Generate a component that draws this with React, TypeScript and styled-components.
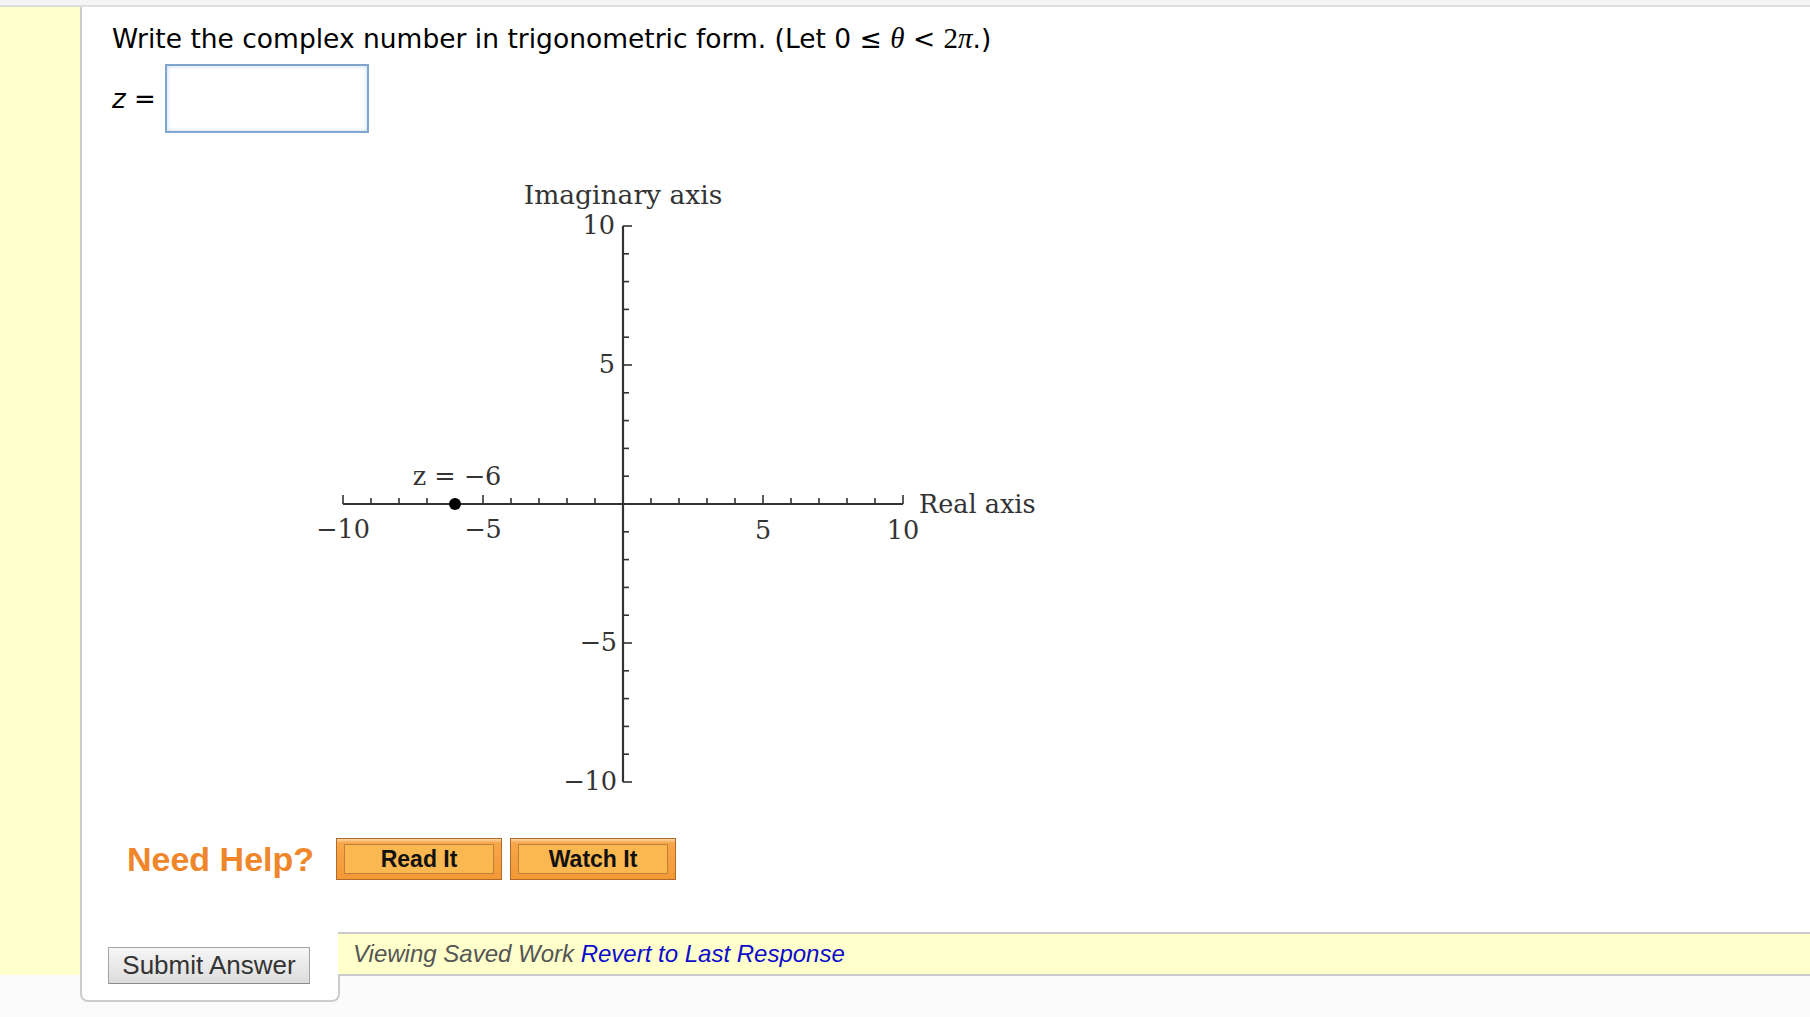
import styled, { createGlobalStyle } from 'styled-components'

const GlobalStyle = createGlobalStyle`
  html, body {
    margin: 0;
    padding: 0;
  }
  body {
    background: #fbfbfb;
    font-family: "DejaVu Sans", Verdana, sans-serif;
    color: #000;
  }
`

const TopStrip = styled.div`
  height: 5px;
  background: #f5f5f5;
  border-bottom: 2px solid #dedede;
`

const Page = styled.div`
  display: flex;
  align-items: flex-start;
`

const Sidebar = styled.div`
  width: 80px;
  height: 968px;
  flex-shrink: 0;
  background: #ffffcc;
`

const Column = styled.div`
  flex: 1;
  display: flex;
  flex-direction: column;
`

const Content = styled.div`
  height: 925px;
  box-sizing: border-box;
  background: #fff;
  border-left: 2px solid #cccccc;
  padding: 16px 0 0 30px;
  display: flex;
  flex-direction: column;
  align-items: flex-start;
`

const Question = styled.p`
  margin: 0;
  font-size: 26.5px;
  line-height: 30px;
`

const MathVar = styled.span<{ upright?: boolean }>`
  font-family: "Liberation Serif", "Times New Roman", serif;
  font-style: ${p => (p.upright ? 'normal' : 'italic')};
  font-size: 29px;
`

const AnswerRow = styled.div`
  display: flex;
  align-items: center;
  gap: 9px;
  margin-top: 10px;
  font-size: 26px;
`

const AnswerLabel = styled.span`
  white-space: pre;
  > i {
    font-style: italic;
  }
`

const AnswerInput = styled.input`
  width: 204px;
  height: 69px;
  box-sizing: border-box;
  border: 2px solid #80a5ce;
  box-shadow: inset 0 0 4px rgba(140, 180, 230, 0.55);
  background: #fff;
  outline: none;
  padding: 0 8px;
  font-size: 24px;
`

const Graph = styled.svg`
  display: block;
  margin: 28px 0 0 188px;
  font-family: "DejaVu Serif", "Liberation Serif", serif;
`

const HelpRow = styled.div`
  display: flex;
  align-items: center;
  margin: 37px 0 0 15px;
`

const HelpLabel = styled.span`
  font-family: "Liberation Sans", Arial, sans-serif;
  font-weight: bold;
  font-size: 34px;
  color: #f0862a;
  margin-right: 22px;
`

const HelpButton = styled.button`
  width: 166px;
  height: 42px;
  box-sizing: border-box;
  margin: 0 8px 0 0;
  padding: 5px 7px;
  border: 1px solid #b26a28;
  background: linear-gradient(#fcd7a4 0, #f7a649 4px, #f39936 100%);
  cursor: pointer;
`

const HelpButtonFace = styled.span`
  display: flex;
  height: 100%;
  box-sizing: border-box;
  align-items: center;
  justify-content: center;
  border: 1px solid #c1813a;
  background: #fbb851;
  font-family: "Liberation Sans", Arial, sans-serif;
  font-weight: bold;
  font-size: 23px;
  color: #111;
`

const Footer = styled.div`
  display: flex;
  align-items: flex-start;
`

const SubmitTab = styled.div`
  width: 260px;
  height: 70px;
  flex-shrink: 0;
  box-sizing: border-box;
  background: #fff;
  border: 2px solid #cccccc;
  border-top: none;
  border-radius: 0 0 8px 8px;
  padding: 15px 0 0 26px;
`

const SubmitButton = styled.button`
  width: 202px;
  height: 37px;
  padding: 0;
  border: 1px solid #a4a4a4;
  border-bottom-color: #8c8c8c;
  background: linear-gradient(#f6f6f6, #dcdcdc);
  font-family: "Liberation Sans", Arial, sans-serif;
  font-size: 26px;
  color: #333;
  cursor: pointer;
`

const SavedStrip = styled.div`
  flex: 1;
  height: 44px;
  box-sizing: border-box;
  margin-left: -2px;
  border-top: 2px solid #cccccc;
  border-bottom: 2px solid #cccccc;
  background: #ffffcc;
  padding-left: 15px;
  display: flex;
  align-items: center;
  font-family: "Liberation Sans", Arial, sans-serif;
  font-style: italic;
  font-size: 24px;
  color: #555;
  white-space: pre;
`

const RevertLink = styled.a`
  color: #0c0ccc;
  text-decoration: none;
  cursor: pointer;
`

const OX = 323
const OY = 343
const UX = 28
const UY = 27.8
const units = Array.from({ length: 21 }, (_, i) => i - 10).filter(u => u !== 0)

function ComplexPlane() {
  return (
    <Graph width="800" height="640" viewBox="0 0 800 640">
      <g stroke="#333" strokeWidth="1.6">
        {units.map(u => {
          const len = u % 5 === 0 ? 9 : 6
          const x = OX + u * UX
          return <line key={'h' + u} x1={x} y1={OY} x2={x} y2={OY - len} />
        })}
        {units.map(u => {
          const len = u % 5 === 0 ? 9 : 6
          const y = OY - u * UY
          return <line key={'v' + u} x1={OX} y1={y} x2={OX + len} y2={y} />
        })}
      </g>
      <g stroke="#333" strokeWidth="2.2">
        <line x1={OX - 10 * UX} y1={OY} x2={OX + 10 * UX} y2={OY} />
        <line x1={OX} y1={OY - 10 * UY} x2={OX} y2={OY + 10 * UY} />
      </g>
      <g fill="#333" fontSize="25.5">
        <text x={OX} y={43} textAnchor="middle" fontSize="26.5">Imaginary axis</text>
        <text x={619} y={352}>Real axis</text>
        <text x={OX - 8} y={OY - 10 * UY + 8} textAnchor="end">10</text>
        <text x={OX - 8} y={OY - 5 * UY + 8} textAnchor="end">5</text>
        <text x={OX - 6} y={OY + 5 * UY + 8} textAnchor="end">−5</text>
        <text x={OX - 6} y={OY + 10 * UY + 8} textAnchor="end">−10</text>
        <text x={OX - 10 * UX} y={377} textAnchor="middle">−10</text>
        <text x={OX - 5 * UX} y={377} textAnchor="middle">−5</text>
        <text x={OX + 5 * UX} y={378} textAnchor="middle">5</text>
        <text x={OX + 10 * UX} y={378} textAnchor="middle">10</text>
        <text x={OX - 6 * UX + 2} y={324} textAnchor="middle">z = −6</text>
      </g>
      <circle cx={OX - 6 * UX} cy={OY} r="6" fill="#000" />
    </Graph>
  )
}

export default function App() {
  return (
    <>
      <GlobalStyle />
      <TopStrip />
      <Page>
        <Sidebar />
        <Column>
          <Content>
            <Question>
              Write the complex number in trigonometric form. (Let 0 ≤ <MathVar>θ</MathVar> &lt;{' '}
              <MathVar upright>2</MathVar>
              <MathVar>π</MathVar>.)
            </Question>
            <AnswerRow>
              <AnswerLabel>
                <i>z</i> =
              </AnswerLabel>
              <AnswerInput type="text" />
            </AnswerRow>
            <ComplexPlane />
            <HelpRow>
              <HelpLabel>Need Help?</HelpLabel>
              <HelpButton>
                <HelpButtonFace>Read It</HelpButtonFace>
              </HelpButton>
              <HelpButton>
                <HelpButtonFace>Watch It</HelpButtonFace>
              </HelpButton>
            </HelpRow>
          </Content>
          <Footer>
            <SubmitTab>
              <SubmitButton>Submit Answer</SubmitButton>
            </SubmitTab>
            <SavedStrip>
              Viewing Saved Work <RevertLink>Revert to Last Response</RevertLink>
            </SavedStrip>
          </Footer>
        </Column>
      </Page>
    </>
  )
}
